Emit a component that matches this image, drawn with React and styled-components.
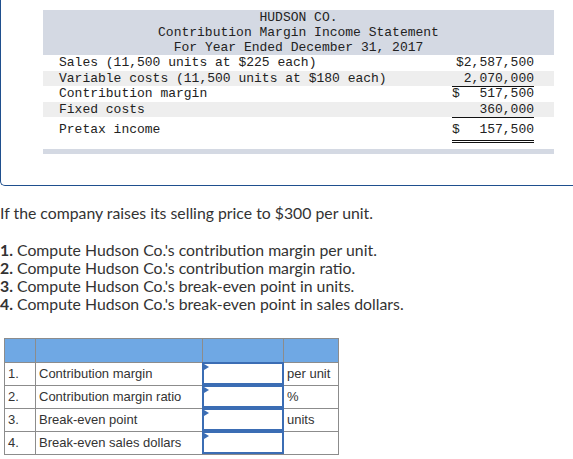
import React from "react";
import styled, { createGlobalStyle } from "styled-components";

const Global = createGlobalStyle`
  html, body { margin: 0; padding: 0; background: #fff; }
  body { font-family: "Liberation Sans", Arial, sans-serif; color: #333; }
`;

const Page = styled.div`
  width: 573px;
  height: 459px;
  overflow: hidden;
`;

const Frame = styled.div`
  border-left: 1px solid #1f4f8e;
  border-bottom: 1px solid #1f4f8e;
  border-bottom-left-radius: 5px;
  padding: 10px 0 31px 42px;
`;

const Statement = styled.div`
  width: 511px;
  font-family: "Liberation Mono", "Courier New", monospace;
  font-size: 13px;
  color: #222;
`;

const Heading = styled.div`
  background: #d4d9e3;
  height: 45px;
  text-align: center;
  line-height: 15px;
`;

const Row = styled.div`
  display: flex;
  align-items: stretch;
  justify-content: space-between;
  padding: ${(p) => (p.$tall ? "5px" : "0")} 20px 0 16px;
  background: ${(p) => (p.$shade ? "#eeeeee" : "transparent")};
  line-height: 15.5px;
  white-space: pre;
`;

const Label = styled.span``;

const Amount = styled.span`
  width: 82px;
  display: flex;
  justify-content: ${(p) => (p.$dollar ? "space-between" : "flex-end")};
  padding-bottom: ${(p) => (p.$rule === "double" ? "2px" : "0")};
  border-bottom: ${(p) =>
    p.$rule === "double"
      ? "3px double #111"
      : p.$rule === "single"
      ? "1px solid #111"
      : "none"};
  margin-bottom: ${(p) => (p.$rule === "single" ? "-1px" : "0")};
`;

const Band = styled.div`
  margin-top: 6px;
  height: 5px;
  background: #d4d9e3;
`;

const Question = styled.div`
  font-family: Lato, "Open Sans", sans-serif;
  font-size: 15.8px;
  line-height: 18px;
  color: #333;
  margin-top: 18px;
`;

const Para = styled.p`
  margin: 0 0 19px;
`;

const List = styled.div``;

const Item = styled.div``;

const Num = styled.b`
  font-weight: 700;
`;

const Answer = styled.table`
  margin: 25px 0 0 4px;
  width: 334px;
  table-layout: fixed;
  border-collapse: collapse;
  font-family: "Liberation Sans", Arial, sans-serif;
  font-size: 13px;
  color: #333;
`;

const HeadCell = styled.th`
  background: #6fa8e4;
  border: 1px solid #8c8c8c;
  height: 23px;
  padding: 0;
`;

const Cell = styled.td`
  border: 1px solid #8c8c8c;
  height: 22px;
  padding: 0 3px;
  white-space: nowrap;
  overflow: hidden;
`;

const InputCell = styled.td`
  border: 1px solid #8c8c8c;
  padding: 0;
  height: 22px;
`;

const InputBox = styled.div`
  position: relative;
  box-sizing: border-box;
  height: 23px;
  margin: -1px;
  border: 2px solid #3b6db4;
  background: #fff;
  &::before {
    content: "";
    position: absolute;
    top: 0px;
    left: 0px;
    border-top: 3px solid transparent;
    border-bottom: 3px solid transparent;
    border-left: 5px solid #3b6db4;
  }
`;

const lines = [
  { label: "Sales (11,500 units at $225 each)", amount: "$2,587,500" },
  { label: "Variable costs (11,500 units at $180 each)", amount: "2,070,000", shade: true, rule: "single" },
  { label: "Contribution margin", amount: "517,500", dollar: true },
  { label: "Fixed costs", amount: "360,000", shade: true, rule: "single" },
  { label: "Pretax income", amount: "157,500", dollar: true, rule: "double", tall: true },
];

const questions = [
  "Compute Hudson Co.'s contribution margin per unit.",
  "Compute Hudson Co.'s contribution margin ratio.",
  "Compute Hudson Co.'s break-even point in units.",
  "Compute Hudson Co.'s break-even point in sales dollars.",
];

const answers = [
  ["Contribution margin", "per unit"],
  ["Contribution margin ratio", "%"],
  ["Break-even point", "units"],
  ["Break-even sales dollars", ""],
];

export default function App() {
  return (
    <Page>
      <Global />
      <Frame>
        <Statement>
          <Heading>
            <div>HUDSON CO.</div>
            <div>Contribution Margin Income Statement</div>
            <div>For Year Ended December 31, 2017</div>
          </Heading>
          {lines.map((l) => (
            <Row key={l.label} $shade={l.shade} $tall={l.tall}>
              <Label>{l.label}</Label>
              <Amount $dollar={l.dollar} $rule={l.rule}>
                {l.dollar && <span>$</span>}
                <span>{l.amount}</span>
              </Amount>
            </Row>
          ))}
          <Band />
        </Statement>
      </Frame>
      <Question>
        <Para>If the company raises its selling price to $300 per unit.</Para>
        <List>
          {questions.map((q, i) => (
            <Item key={i}>
              <Num>{i + 1}.</Num> {q}
            </Item>
          ))}
        </List>
      </Question>
      <Answer>
        <colgroup>
          <col style={{ width: 31 }} />
          <col style={{ width: 167 }} />
          <col style={{ width: 81 }} />
          <col style={{ width: 55 }} />
        </colgroup>
        <thead>
          <tr>
            <HeadCell />
            <HeadCell />
            <HeadCell />
            <HeadCell />
          </tr>
        </thead>
        <tbody>
          {answers.map(([a, u], i) => (
            <tr key={a}>
              <Cell>{i + 1}.</Cell>
              <Cell>{a}</Cell>
              <InputCell>
                <InputBox />
              </InputCell>
              <Cell>{u}</Cell>
            </tr>
          ))}
        </tbody>
      </Answer>
    </Page>
  );
}
